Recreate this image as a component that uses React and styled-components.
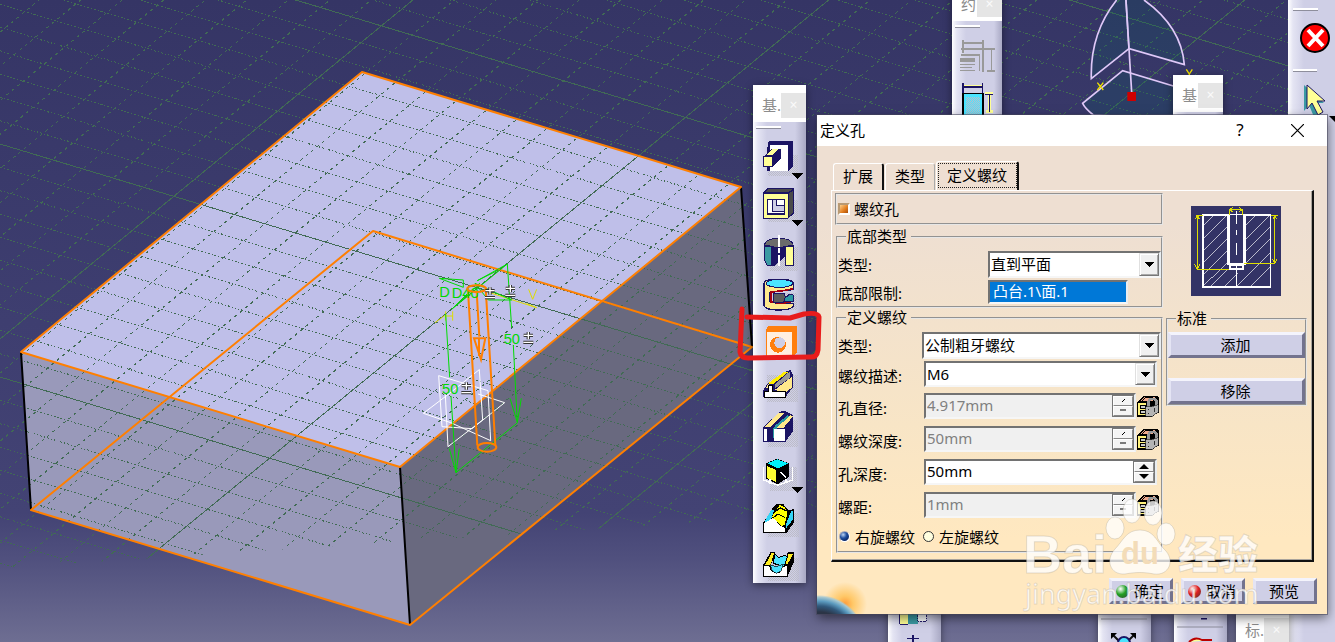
import React from "react";
import styled, { createGlobalStyle, css } from "styled-components";

const GlobalStyle = createGlobalStyle`
	* {
		box-sizing: border-box;
	}

	body {
		margin: 0;
		font-family: "Noto Sans", "Noto Sans CJK SC", sans-serif;
		font-size: 15px;
		line-height: 20px;
		color: #000;
	}

	button, input, select {
		font: inherit;
		color: inherit;
		margin: 0;
	}
`;

const Desktop = styled.main`
	position: relative;
	width: 100%;
	height: 100vh;
	overflow: hidden;
	background: linear-gradient(#353565 0, #3e3e70 50%, #434374 80%, #50507e 87%, #6e6e92 100%);
`;

const Layer = styled.svg`
	position: absolute;
	inset: 0;
	width: 100%;
	height: 100%;
	pointer-events: none;
`;

/* ---------- floating toolbars ---------- */

const Palette = styled.section`
	position: absolute;
	left: ${({ $x }) => $x}px;
	top: ${({ $y }) => $y}px;
	width: ${({ $width }) => $width || 53}px;
	background: #cfcfe6;
	box-shadow: 0 2px 8px rgba(0, 0, 0, .45);
`;

const PaletteTitle = styled.header`
	display: flex;
	align-items: center;
	justify-content: space-between;
	height: 37px;
	padding: 3px 0 0 9px;
	background: #fff;
	color: #8c8c8c;
	white-space: nowrap;
	overflow: hidden;
`;

const PaletteClose = styled.button`
	width: 25px;
	height: 25px;
	padding: 0;
	border: 0;
	flex: none;
	background: #e5e5e5;
	color: #fafafa;
	font-size: 14px;
	line-height: 24px;
`;

const PaletteBody = styled.div`
	display: flex;
	flex-direction: column;
	padding: 4px 0 0 3px;
	height: ${({ $height }) => ($height ? `${$height}px` : "auto")};
	background: linear-gradient(90deg, #fff 0, #e4e4f3 5px, #cfcfe6 14px, #cfcfe6 42px, #a9a9c4 100%);
`;

const Grip = styled.div`
	width: 25px;
	height: 3px;
	flex: none;
	margin-bottom: ${({ $after }) => $after || 0}px;
	border-top: 2px solid #fff;
	border-bottom: 1px solid #8e8e9c;
`;

const Tool = styled.button`
	display: flex;
	align-items: flex-end;
	height: ${({ $flyout }) => ($flyout ? 47 : 44)}px;
	padding: 0 0 0 7px;
	border: 0;
	background: none;
`;

const ToolIcon = styled.svg`
	width: 42px;
	height: 100%;
	display: block;
	flex: none;
`;

const NAVY = "#1b1464";

const shadowDots = (x, y, w, h) => <rect x={x} y={y} width={w} height={h} fill="url(#dots)" />;

const TOOLS = [
  {
    name: "凸台",
    flyout: true,
    top: 183,
    art: (
      <>
        {shadowDots(84, 225, 90, 62)}
        <path d="M86 184h74v76l-14 14H82v-70z" fill={NAVY} />
        <path d="M91 196h53v76H91z" fill="#fff" />
        <path d="M70 230l26-24h28v28l-26 26H70z" fill={NAVY} />
        <path d="M78 226l20-18h16l-17 18z" fill="#ffff96" />
        <path d="M72 231h23v27H72z" fill="#ffff96" />
      </>
    ),
  },
  {
    name: "凹槽",
    flyout: true,
    top: 324,
    art: (
      <>
        {shadowDots(84, 360, 90, 66)}
        <path d="M82 324h80v76l-18 16H70v-78z" fill={NAVY} />
        <path d="M85 328h72l-12 9H76zM147 341l12-10v66l-12 12z" fill="#4b4b4b" />
        <path d="M72 341h72v72H72z" fill="#ffff96" />
        <path d="M82 358h51v44H82z" fill="#fff" stroke={NAVY} strokeWidth="4" />
        <path d="M97 360h13v17h22v17H97z" fill="#cfcfe6" />
        <path d="M97 360v34h36M110 360v17h23" fill="none" stroke={NAVY} strokeWidth="3" />
      </>
    ),
  },
  {
    name: "旋转体",
    top: 465,
    art: (
      <>
        {shadowDots(90, 500, 84, 74)}
        <path d="M72 496q2-22 44-22t45 22v62h-26v-44h-4v20l-14 12-15 12H82l-10-18z" fill={NAVY} />
        <path d="M76 494q4-18 40-18t42 18l-22 4-20 5-20-5z" fill="#6b6b6b" />
        <path d="M98 500h37v30l-20 16-17 8z" fill={NAVY} />
        <path d="M76 500h18v55H83l-7-14z" fill="#3b9aa3" />
        <path d="M139 500h20v56h-20z" fill="#ffff96" />
        <path d="M117 466v92" stroke="#fff" strokeWidth="6" strokeDasharray="34 5 14 5" />
      </>
    ),
  },
  {
    name: "旋转槽",
    top: 597,
    art: (
      <>
        {shadowDots(100, 640, 72, 50)}
        <path d="M72 609q4-12 44-12t44 12v20l-22 2-32 4-16 4v26l26 6 44-1v8q-6 12-44 12t-44-12z" fill="#ffe98c" stroke={NAVY} strokeWidth="4" />
        <ellipse cx="118" cy="610" rx="40" ry="12" fill="#4ae4ff" stroke={NAVY} strokeWidth="3" />
        <path d="M160 626l-30 6-38 4v30l34 4 34-6" fill="none" stroke="#a30012" strokeWidth="5" />
        <path d="M100 640h32l6 14-6 12h-32z" fill="#5c5c5c" stroke={NAVY} strokeWidth="3" />
        <path d="M134 655l14-12 12 2v18h-28z" fill="#2b9aa3" stroke={NAVY} strokeWidth="3" />
      </>
    ),
  },
  {
    name: "孔",
    top: 69,
    art: (
      <>
        <path d="M86 78h84v80l-8 9H78V88z" fill="#ff7f0e" />
        <path d="M81 95h76v72H81z" fill="#ffefe0" />
        <circle cx="114" cy="134" r="24" fill="#ff7f0e" />
        <circle cx="119" cy="128" r="16" fill="#cfcfe6" />
      </>
    ),
  },
  {
    name: "肋",
    top: 201,
    art: (
      <>
        {shadowDots(82, 225, 92, 80)}
        <path d="M70 270l12-18 50-36 20-6 6 14v38l-22 30H70z" fill={NAVY} />
        <path d="M76 264l10-12 2 12z" fill="#ffe98c" />
        <path d="M84 250l50-35 10 2-46 36z" fill="#ffee00" />
        <path d="M104 254l46-40v20l-44 30z" fill="#989898" />
        <path d="M104 270l52-40v32l-20 16z" fill="#ffe98c" />
        <path d="M72 273h12v-18h12v18h40v18H72z" fill="#fff" stroke="#000" strokeWidth="3" />
      </>
    ),
  },
  {
    name: "开槽",
    top: 333,
    art: (
      <>
        {shadowDots(84, 360, 90, 80)}
        <path d="M70 382l48-46 14-4 28 14v46l-24 34H70z" fill={NAVY} />
        <path d="M74 382l42-42 18-2-34 34-10 10z" fill="#ffe98c" />
        <path d="M110 384l40-38 10 2-30 36z" fill="#ffe98c" />
        <path d="M98 388l8-12 36-30 6 2-36 34-4 14v18H98z" fill="#2b9aa3" />
        <path d="M72 388h10v35H72zM102 388h34v35h-34z" fill="#fff" />
        <path d="M82 386h14v30H82z" fill={NAVY} />
      </>
    ),
  },
  {
    name: "加强肋",
    flyout: true,
    top: 465,
    art: (
      <>
        {shadowDots(90, 500, 80, 74)}
        <path d="M79 490l32-14 35 14v42l-34 20-33-16z" fill="#000" />
        <path d="M82 490l30-12 32 12-30 15z" fill="#00f0f8" />
        <path d="M81 498l28 12v36l-28-12z" fill="#ffff32" />
        <path d="M70 502v38l44 16 44-16v-38M90 538v14M138 538v10M122 516l16 16" fill="none" stroke="#fff" strokeWidth="4" />
        <path d="M114 514v38" stroke="#000" strokeWidth="6" />
      </>
    ),
  },
  {
    name: "多截面实体",
    top: 606,
    art: (
      <>
        {shadowDots(84, 640, 92, 70)}
        <path d="M70 668l28-44 12-12h20l14 18 18-2v40l-22 30H70z" fill="#000" />
        <path d="M74 664l20-34h8l-8 26-14 16zM138 672l16-40h5v26l-20 26z" fill="#35d4f5" />
        <path d="M94 654l12-20 14-20 14 8 8 18-8 34-10 4-14-16z" fill="#ffff00" />
        <path d="M104 634l18-10 16 8M98 654l16-12 20 10" fill="none" stroke="#000" strokeWidth="4" />
        <path d="M72 696v-26l14-8 12-8 10 6 8 14 20 10v12z" fill="#fff" />
      </>
    ),
  },
  {
    name: "已移除的多截面实体",
    top: 738,
    art: (
      <>
        {shadowDots(84, 775, 92, 68)}
        <path d="M70 794l22-38h14v10l-14 28zM134 780l10-24h18v28l-18 43h-14z" fill="#000" />
        <path d="M76 794l18-34h8l-10 34zM136 786l10-24h13l-15 28-6 4z" fill="#ffee22" />
        <path d="M100 790l4-28 12 10 20-6 6 4-10 30z" fill="#4ae4ff" stroke="#000" strokeWidth="3" />
        <path d="M71 796h18l4 14 12 8 14-2 8-16 14-4v32H71z" fill="#fff" stroke="#000" strokeWidth="3" />
        <path d="M90 794l18 6 22-8-6 20-14 8-12-6z" fill="#4ae4ff" stroke="#000" strokeWidth="2" />
      </>
    ),
  },
];

/* ---------- dialog ---------- */

const Dialog = styled.section`
	position: absolute;
	left: 817px;
	top: 115px;
	width: 510px;
	background: linear-gradient(#eedfd2 0, #eedfd2 22%, #f8e5c6 62%, #ffe8c0 85%);
	box-shadow: 0 0 0 1px rgba(70, 70, 90, .55), 1px 4px 10px rgba(0, 0, 0, .5);
`;

const TitleBar = styled.header`
	display: flex;
	align-items: center;
	height: 31px;
	padding: 0 7px 1px 3px;
	background: #fff;
`;

const Title = styled.h1`
	flex: 1;
	margin: 0;
	font-size: 15px;
	font-weight: 400;
`;

const WindowButton = styled.button`
	display: flex;
	align-items: center;
	justify-content: center;
	width: ${({ $wide }) => ($wide ? 46 : 68)}px;
	height: 30px;
	padding: 0;
	border: 0;
	background: none;
	font-size: 17px;
`;

const DialogBody = styled.div`
	padding: 15px 13px 0 14px;
`;

const Tabs = styled.div`
	display: flex;
	align-items: flex-end;
	gap: 1px;
	padding-left: 2px;
`;

const Tab = styled.button`
	height: 27px;
	padding: 0 ${({ $active }) => ($active ? 10 : 9)}px 3px;
	background: none;
	border: 0;
	border-top: 1px solid #fff;
	border-left: 1px solid #fff;
	border-right: 1px solid #aaa;
	border-radius: 3px 3px 0 0;

	${({ $edge }) => $edge && css`
		border-right: 2px solid #111;
	`}

	${({ $active }) => $active && css`
		height: 29px;
		border-right: 2px solid #111;
		outline: 1px dotted #222;
		outline-offset: -3px;
	`}
`;

const Panel = styled.div`
	display: flex;
	gap: 2px;
	padding: 2px 5px 7px 3px;
	border: 1px solid #fff;
	border-right: 2px solid #111;
	border-bottom: 2px solid #111;
	box-shadow: inset -1px -1px 0 #a9a49c;
`;

const Main = styled.div`
	flex: 1;
	min-width: 0;
`;

const Side = styled.div`
	width: 142px;
`;

const CheckFrame = styled.label`
	display: flex;
	align-items: center;
	gap: 4px;
	height: 32px;
	padding-left: 1px;
	border: 2px groove #e6e6e6;
`;

const Check = styled.input`
	appearance: none;
	width: 12px;
	height: 12px;
	border: 2px solid;
	border-color: #b99a74 #fff #fff #b99a74;
	background: linear-gradient(135deg, #ffd08a, #e07a1c 60%, #a9500c);
`;

const Group = styled.fieldset`
	margin: ${({ $gap }) => $gap}px 0 0 1px;
	padding: 5px 0 0;
	min-width: 0;
	border: 2px groove #e6e6e6;
`;

const Legend = styled.legend`
	height: 16px;
	margin-left: 8px;
	padding: 0 4px 0 1px;
	line-height: 15px;
`;

const Row = styled.div`
	display: flex;
	align-items: center;
	height: ${({ $height }) => $height || 33}px;
	padding-right: ${({ $end }) => $end || 0}px;
`;

const Label = styled.label`
	width: ${({ $width }) => $width || 86}px;
	flex: none;
	padding-top: ${({ $width }) => ($width ? 1 : 4)}px;
	white-space: nowrap;
`;

const Sunken = styled.span`
	display: flex;
	flex: ${({ $width }) => ($width ? "none" : 1)};
	width: ${({ $width }) => ($width ? `${$width}px` : "auto")};
	min-width: 0;
	height: ${({ $height }) => $height || 26}px;
	background: ${({ $off }) => ($off ? "#f0f0f0" : "#fff")};
	color: ${({ $off }) => ($off ? "#808080" : "#000")};
	border: 2px solid;
	border-color: #727272 #e9edf0 #f6f6f6 #727272;
`;

const Select = styled.select`
	flex: 1;
	min-width: 0;
	appearance: none;
	border: 0;
	padding: 0 1px;
	background: none;
`;

const SelectArrow = styled.span`
	display: flex;
	align-items: center;
	justify-content: center;
	width: 20px;
	background: #f0f0f0;
	border: 1px solid;
	border-color: #e0e0e0 #777 #777 #e0e0e0;
	box-shadow: inset 1px 1px 0 #fff, inset -1px -1px 0 #a8a8a8;
	pointer-events: none;
`;

const Input = styled.input`
	flex: 1;
	width: 100%;
	min-width: 0;
	padding: 0 0 2px ${({ $picked }) => ($picked ? 3 : 1)}px;
	border: 0;
	background: ${({ $picked }) => ($picked ? "#0078d7" : "none")};
	color: ${({ $picked }) => ($picked ? "#fff" : "inherit")};
`;

const Spin = styled.span`
	display: flex;
	flex-direction: column;
	width: 22px;
	border: 1px solid #777;
`;

const SpinButton = styled.button`
	display: flex;
	align-items: center;
	justify-content: center;
	flex: 1;
	min-height: 0;
	padding: 0;
	background: #f4f4f4;
	border: 1px solid;
	border-color: #fff #888 #888 #fff;
`;

const LockButton = styled.button`
	width: 22px;
	height: 22px;
	margin-left: 1px;
	padding: 0;
	border: 0;
	background: none;

	svg {
		display: block;
	}
`;

const Radios = styled.div`
	display: flex;
	align-items: center;
	gap: 8px;
	height: 30px;
	padding: 1px 0 0 1px;
`;

const RadioLabel = styled.label`
	display: flex;
	align-items: center;
	gap: 5px;
`;

const Radio = styled.input`
	appearance: none;
	width: 11px;
	height: 11px;
	border: 1px solid #333;
	border-radius: 50%;
	background: #ffffe0;

	&:checked {
		border-color: #a9a9b8 #fff #fff #a9a9b8;
		background: radial-gradient(circle at 35% 30%, #bcd4f4, #1f4fa0 40%, #06205e 80%);
	}
`;

const Diagram = styled.svg`
	display: block;
	width: 90px;
	height: 90px;
	margin: 13px auto 0 26px;
`;

const SideButtons = styled.div`
	display: flex;
	flex-direction: column;
	gap: 20px;
`;

const PushButton = styled.button`
	display: flex;
	align-items: center;
	justify-content: center;
	gap: 5px;
	height: 26px;
	width: ${({ $width }) => ($width ? `${$width}px` : "100%")};
	padding: 0 2px 0 0;
	white-space: nowrap;
	background: #cfcfe6;
	border: 3px solid;
	border-color: #f4f4fc #73738e #73738e #e4e4f4;
`;

const Dot = styled.span`
	width: 13px;
	height: 13px;
	border-radius: 50%;
	background: radial-gradient(circle at 35% 30%, #fff, ${({ $color }) => $color} 45%, #333 110%);
`;

const Footer = styled.footer`
	display: flex;
	justify-content: flex-end;
	gap: 8px;
	padding: 16px 10px 10px 0;
	background:
		radial-gradient(circle at 2px 80px, #2b3446 30px, #31597c 36px, #5d9cc0 41px, #a8c8d0 45px, transparent 47px),
		radial-gradient(circle at 28px 42px, #ff9c38 0, #ffc868 8px, transparent 22px);
`;

const Down = () => (
  <svg width="10" height="5" viewBox="0 0 10 5" shapeRendering="crispEdges"><path d="M0 0h10L5 5z" /></svg>
);

const Lock = () => (
  <svg width="22" height="22" viewBox="198 274 66 66" shapeRendering="crispEdges">
    <path d="M199 296l20-20h41l4 8v42l-22 13h-43z" fill="#000" />
    <path d="M208 293l14-14h31l-8 14z" fill="#efaa8c" />
    <path d="M214 290l10-8h22" stroke="#000" strokeWidth="3" fill="none" />
    <path d="M202 298h22v36h-22z" fill="#fff27a" />
    <path d="M208 304h14v10h-14zM208 319h14v9h-14z" fill="#ccc" stroke="#000" strokeWidth="3" />
    <path d="M232 310v-16l7-8h11l7 7v15" fill="none" stroke="#999" strokeWidth="8" />
    <path d="M224 309h17l21-6v22l-17 12h-21z" fill="#b4b4b4" stroke="#333" strokeWidth="2" />
    <path d="M230 318h5M230 329h5M250 312v14" stroke="#333" strokeWidth="4" />
  </svg>
);

const Field = ({ id, label, value, locked }) => (
  <Row $end={locked ? 2 : 4}>
    <Label htmlFor={id}>{label}</Label>
    <Sunken $off={locked}>
      <Input id={id} defaultValue={value} disabled={locked} />
      <Spin>
        <SpinButton type="button" aria-label="增加" disabled={locked}>
          <svg width="10" height="5" viewBox="0 0 10 5"><path d={locked ? "M4 4l3-3" : "M0 5h10L5 0z"} stroke={locked ? "#000" : "none"} /></svg>
        </SpinButton>
        <SpinButton type="button" aria-label="减少" disabled={locked}>
          <svg width="10" height="5" viewBox="0 0 10 5"><path d={locked ? "M2 2h6" : "M0 0h10L5 5z"} stroke={locked ? "#000" : "none"} /></svg>
        </SpinButton>
      </Spin>
    </Sunken>
    {locked && <LockButton type="button" aria-label="公式"><Lock /></LockButton>}
  </Row>
);

const HoleDiagram = () => (
  <Diagram viewBox="363 273 270 270" shapeRendering="crispEdges">
    <path d="M363 273h270v270H363z" fill="#333366" />
    <g stroke="#fff" strokeWidth="3" fill="none">
      <path d="M398 334l34-34M398 374l74-74M398 410l74-74M398 446l74-74M398 482l74-74M398 514l74-70M421 515l52-52M462 515l42-42M525 334l34-34M525 374l74-74M525 410l75-75M525 446l75-75M500 515l100-100M540 515l60-60" strokeWidth="2" />
      <path d="M398 299h203v217H398z" strokeWidth="5" />
      <path d="M475 299v148h48V299" fill="#333366" strokeWidth="7" />
      <path d="M479 449h40v13h-40z" fill="#333366" strokeWidth="5" />
      <path d="M499 288v40M499 346v14M499 384v36M499 450v8M499 466v48" />
    </g>
    <path d="M398 301h-20M382 301v162h94M376 312l6-11 6 11M374 447l8 16 8-16M602 301h21M614 301v144h-92M608 313l6-11 6 11M608 433l6 12 6-12M478 299v-15h40v15M488 278l-9 6 9 6M508 278l9 6-9 6" fill="none" stroke="#dede00" strokeWidth="3" />
  </Diagram>
);

const HoleDialog = () => (
  <Dialog role="dialog" aria-labelledby="dialog-title">
    <TitleBar>
      <Title id="dialog-title">定义孔</Title>
      <WindowButton type="button" aria-label="帮助">?</WindowButton>
      <WindowButton type="button" aria-label="关闭" $wide>
        <svg width="13" height="13" viewBox="0 0 13 13"><path d="M0 0l13 13M13 0L0 13" stroke="#000" strokeWidth="1.2" /></svg>
      </WindowButton>
    </TitleBar>
    <DialogBody>
      <Tabs role="tablist">
        <Tab type="button" role="tab" $edge>扩展</Tab>
        <Tab type="button" role="tab">类型</Tab>
        <Tab type="button" role="tab" aria-selected="true" $active>定义螺纹</Tab>
      </Tabs>
      <Panel role="tabpanel">
        <Main>
          <CheckFrame>
            <Check type="checkbox" defaultChecked />
            螺纹孔
          </CheckFrame>
          <Group $gap={4}>
            <Legend>底部类型</Legend>
            <Row $height={28}>
              <Label htmlFor="bottom-type" $width={150}>类型:</Label>
              <Sunken $height={27}>
                <Select id="bottom-type"><option>直到平面</option></Select>
                <SelectArrow><Down /></SelectArrow>
              </Sunken>
            </Row>
            <Row $height={28}>
              <Label htmlFor="bottom-limit" $width={150}>底部限制:</Label>
              <Sunken $height={24} $width={140}>
                <Input id="bottom-limit" defaultValue="凸台.1\面.1" $picked />
              </Sunken>
            </Row>
          </Group>
          <Group $gap={2}>
            <Legend>定义螺纹</Legend>
            <Row $height={28}>
              <Label htmlFor="thread-type" $width={84}>类型:</Label>
              <Sunken $height={27}>
                <Select id="thread-type"><option>公制粗牙螺纹</option></Select>
                <SelectArrow><Down /></SelectArrow>
              </Sunken>
            </Row>
            <Row $height={30} $end={4}>
              <Label htmlFor="thread-size">螺纹描述:</Label>
              <Sunken>
                <Select id="thread-size"><option>M6</option></Select>
                <SelectArrow><Down /></SelectArrow>
              </Sunken>
            </Row>
            <Field id="hole-diameter" label="孔直径:" value="4.917mm" locked />
            <Field id="thread-depth" label="螺纹深度:" value="50mm" locked />
            <Field id="hole-depth" label="孔深度:" value="50mm" />
            <Field id="pitch" label="螺距:" value="1mm" locked />
            <Radios>
              <RadioLabel><Radio type="radio" name="hand" defaultChecked />右旋螺纹</RadioLabel>
              <RadioLabel><Radio type="radio" name="hand" />左旋螺纹</RadioLabel>
            </Radios>
          </Group>
        </Main>
        <Side>
          <HoleDiagram />
          <Group $gap={15}>
            <Legend>标准</Legend>
            <SideButtons>
              <PushButton type="button">添加</PushButton>
              <PushButton type="button">移除</PushButton>
            </SideButtons>
          </Group>
        </Side>
      </Panel>
    </DialogBody>
    <Footer>
      <PushButton type="button" $width={64}><Dot $color="#22a022" />确定</PushButton>
      <PushButton type="button" $width={64}><Dot $color="#e02020" />取消</PushButton>
      <PushButton type="button" $width={64}>预览</PushButton>
    </Footer>
  </Dialog>
);

/* ---------- 3D view ---------- */

const range = (from, to) => Array.from({ length: to - from + 1 }, (_, i) => from + i);

const Grid = () => (
  <g stroke="#416b54" fill="none" clipPath="url(#ground)" shapeRendering="crispEdges">
    {range(-18, 29).map((j) => (
      <line
        key={`a${j}`}
        x1="0"
        y1={-89 + j * 23.3}
        x2="1335"
        y2={-89 + j * 23.3 + 402}
        strokeDasharray={j % 10 === 0 ? "none" : "2 2 1 2"}
      />
    ))}
    {range(-16, 38).map((k) => (
      <line
        key={`b${k}`}
        x1={794 + k * 30.3}
        y1={-313 + k * 9.3}
        x2={-448 + k * 30.3}
        y2={707 + k * 9.1}
        strokeDasharray={k % 10 === 0 ? "none" : "3 4"}
      />
    ))}
  </g>
);

const PlusMinus = ({ x, y }) => (
  <g transform={`translate(${x} ${y})`} fill="none">
    <path d="M0 -16v22M-14 -6h28M-15 15h30" stroke="#333" strokeWidth="10" />
    <path d="M0 -16v22M-14 -6h28M-15 15h30" stroke="#fff" strokeWidth="4" />
  </g>
);

const Scene = () => (
  <Layer viewBox="0 0 1335 642" preserveAspectRatio="xMinYMin slice">
    <defs>
      <clipPath id="ground"><path d="M0 0h1335v480L0 568z" /></clipPath>
      <pattern id="dots" width="6" height="6" patternUnits="userSpaceOnUse">
        <path d="M0 0h3v3H0zM3 3h3v3H3z" fill="#bcbcc8" />
      </pattern>
    </defs>
    <path d="M362 72l379 115-341 280L21 352z" fill="#bfbfe9" />
    <path d="M21 352l379 115 10 158L31 510z" fill="#9999ba" />
    <path d="M741 187l11 160-342 278-10-158z" fill="#69697f" />
    <Grid />
    <path d="M21 352l10 158M400 467l10 158M741 187l11 160" stroke="#000" strokeWidth="2" />
    <path d="M362 72l379 115-341 280L21 352zM31 510l379 115 342-278-379-116z" fill="none" stroke="#ff7f00" strokeWidth="2" strokeLinejoin="round" />

    <g transform="translate(400 220) scale(.3333)" fill="none" strokeWidth="3">
      <path d="M239 448l-90 72-79 60 82 28 120 54-8-150-148-45 10 153 90 6 98-78-80-26M136 525l8 155 104-80-10-150" stroke="#fff" />
      <path d="M105 308l30-22M260 215l150 48-30-12M386 208l12 30 12-30M137 302v-28M158 302v-28M137 288h21" stroke="#dddd00" />
      <path d="M322 132l13 190M340 375l12 232-22-72M352 607l12-72M137 282l12 190M153 528l15 230-20-72M168 758l10-72M168 758l185-150M118 175l72 5v22zM155 268l167-136-90 50 60-30M155 268l50-50M225 190l110 50h-70zM180 245l60-56" stroke="#00dd00" />
      <path d="M204 212l28 465M257 205l29 470M230 215l8 135" stroke="#ff7f00" strokeWidth="6" />
      <path d="M222 355h34l-13 64zM237 358v50" stroke="#ff7f00" strokeWidth="6" />
      <ellipse cx="261" cy="682" rx="28" ry="13" stroke="#ff7f00" strokeWidth="6" />
      <g fill="#00d800" fontFamily="Liberation Sans" fontSize="44">
        <text x="118" y="230">D</text>
        <text x="155" y="234">D40</text>
        <text x="311" y="372">50</text>
        <text x="126" y="522">50</text>
      </g>
      <ellipse cx="230" cy="206" rx="28" ry="10" stroke="#ff7f00" strokeWidth="6" />
      <PlusMinus x={270} y={218} />
      <PlusMinus x={331} y={211} />
      <PlusMinus x={385} y={352} />
      <PlusMinus x={199} y={503} />
    </g>

    <g transform="translate(940 0) scale(.3333)" stroke="#dfc8f8" strokeWidth="5" fill="none">
      <path d="M530 0Q450 100 454 236L567 146 558 0z" fill="rgba(0, 90, 90, .2)" stroke="none" />
      <path d="M530 0Q450 100 454 236L567 146 558 0" />
      <path d="M612 0Q724 80 733 194L567 146 558 0z" fill="rgba(0, 90, 90, .2)" stroke="none" />
      <path d="M612 0Q724 80 733 194L567 146 558 0" />
      <path d="M460 345q-25-20-32-35L548 212l152 46 60 20v80z" fill="rgba(0, 90, 90, .2)" />
      <path d="M567 146l8 130" />
      <path d="M562 276h26v27h-26z" fill="#d00000" stroke="none" />
      <path d="M472 248l18 22M490 248l-18 22M739 208l9 14 9-14M748 222v10" stroke="#f0e000" strokeWidth="4" />
    </g>
  </Layer>
);

const ConstraintBar = () => (
  <Palette $x={952} $y={-16} $width={50}>
    <PaletteTitle>约<PaletteClose aria-label="关闭">×</PaletteClose></PaletteTitle>
    <PaletteBody $height={120}>
      <Grip />
      <svg width="40" height="100" viewBox="45 87 120 300" shapeRendering="crispEdges">
        <path d="M69 122v40M128 122v96M69 132h60M62 150h102M154 150v66M140 216h24M62 168h56v48" fill="none" stroke="#999" strokeWidth="5" />
        <path d="M60 176h44v12H60zM60 194h44v3H60zM60 203h36v3H60zM60 212h44v3H60z" fill="#999" />
        <path d="M69 262h60M134 284h24M148 288v50M138 338h20" stroke="#ffff96" strokeWidth="10" />
        <path d="M69 252v30M128 252v30M69 264h60M134 286h24M148 288v50" stroke={NAVY} strokeWidth="4" />
        <path d="M69 283h60v80H69z" fill="#4ae4ff" stroke="#000" strokeWidth="5" />
        <path d="M78 294h42v60H78z" fill="url(#dots)" />
      </svg>
    </PaletteBody>
  </Palette>
);

const FeatureBar = () => (
  <Palette $x={753} $y={85} as="nav">
    <PaletteTitle>基.<PaletteClose aria-label="关闭">×</PaletteClose></PaletteTitle>
    <PaletteBody $height={461}>
      <Grip $after={12} />
      {TOOLS.map(({ name, top, art, flyout }) => (
        <Tool key={name} type="button" title={name} $flyout={flyout}>
          <ToolIcon viewBox={`69 ${top} 126 ${flyout ? 141 : 132}`} shapeRendering="crispEdges">
            {art}
            {flyout && <path d={`M155 ${top + 96}h36l-18 18z`} />}
          </ToolIcon>
        </Tool>
      ))}
    </PaletteBody>
  </Palette>
);

const RightDock = styled.aside`
	position: absolute;
	top: 0;
	bottom: 0;
	right: 0;
	width: 47px;
	padding: 8px 0 0 5px;
	background: linear-gradient(90deg, #fff 0, #e4e4f3 5px, #cfcfe6 16px);
`;

const SmallBars = () => (
  <>
    <Palette $x={888} $y={560}>
      <PaletteBody $height={90}>
        <svg width="46" height="90" viewBox="0 0 46 90" shapeRendering="crispEdges">
          <path d="M8 46h9v17H8zM10 46h20v6H10z" fill="#ffff96" stroke={NAVY} />
          <path d="M17 52h10v11H17z" fill="#3b9aa3" />
          <path d="M27 50h9v10h-9z" fill="#fff" stroke={NAVY} strokeDasharray="2 1" />
          <path d="M16 78h12M22 74v8" stroke={NAVY} strokeWidth="2" />
        </svg>
      </PaletteBody>
    </Palette>
    <Palette $x={1098} $y={614}>
      <PaletteBody $height={60}>
        <svg width="48" height="30" viewBox="0 0 48 30">
          <path d="M0 1h46" stroke="#8e8e9c" />
          <path d="M12 17l7 7M33 17l-7 7" stroke="#111" strokeWidth="2" />
          <path d="M10 15h6l-6 6zM35 15h-6l6 6z" />
          <circle cx="23" cy="25" r="6" fill="#4ae4ff" stroke={NAVY} strokeWidth="2" />
        </svg>
      </PaletteBody>
    </Palette>
    <Palette $x={1174} $y={614}>
      <PaletteBody $height={60}>
        <svg width="48" height="30" viewBox="0 0 48 30">
          <path d="M0 9h46" stroke="#8e8e9c" />
          <path d="M12 24q6-6 13-2h10" stroke="#b00" strokeWidth="2" fill="#ffff96" />
          <path d="M18 0v-2M24 0h6" stroke={NAVY} strokeWidth="3" />
        </svg>
      </PaletteBody>
    </Palette>
    <Palette $x={1236} $y={610}>
      <PaletteTitle>标.<PaletteClose aria-label="关闭">×</PaletteClose></PaletteTitle>
    </Palette>
    <Palette $x={1173} $y={75} $width={50}>
      <PaletteTitle>基<PaletteClose aria-label="关闭">×</PaletteClose></PaletteTitle>
      <PaletteBody $height={20} />
    </Palette>
  </>
);

const Dock = () => (
  <RightDock>
    <Grip />
    <svg width="42" height="112" viewBox="1293 11 42 112">
      <circle cx="1315" cy="38" r="14" fill="#ff0000" stroke="#000" strokeWidth="2" />
      <path d="M1308 30l15 16M1323 30l-15 16" stroke="#fff" strokeWidth="4" />
      <path d="M1293 70h24" stroke="#fff" strokeWidth="2" />
      <path d="M1293 71.500h24" stroke="#8e8e9c" />
      <path d="M1304 85v26l5-6 5 12 7-3-5-11h8z" fill="#3b9aa3" />
      <path d="M1307 85v24l5-6 6 12 5-3-6-11h8z" fill="#ffff96" stroke={NAVY} />
      <path d="M1329 116h12l-6 6z" />
    </svg>
  </RightDock>
);

const Overlay = () => (
  <Layer viewBox="0 0 1335 642" preserveAspectRatio="xMinYMin slice">
    <path d="M747 317l43 1 14-4q14-2 15 3l-1 33q-1 8-8 7l-62 1q-7 0-8-6l2-43" fill="none" stroke="#e81c1c" strokeWidth="5" strokeLinecap="round" strokeLinejoin="round" />
    <g fill="#fff" fillOpacity=".78" stroke="#a39a8a" strokeOpacity=".3">
      <text x="1023" y="573" fontFamily="Liberation Sans" fontWeight="700" fontSize="54" strokeWidth="1">Bai</text>
      <ellipse cx="1115" cy="528" rx="9" ry="11" />
      <ellipse cx="1132" cy="511" rx="9" ry="12" />
      <ellipse cx="1153" cy="513" rx="9" ry="12" />
      <ellipse cx="1166" cy="534" rx="9" ry="11" />
      <path d="M1140 530c14 0 17 12 24 19 12 11 5 27-10 25-10-2-18-2-29 0-15 1-20-14-10-25 8-8 11-19 25-19z" />
      <text x="1178" y="569" fontFamily="Noto Sans CJK SC" fontWeight="900" fontSize="40">经验</text>
      <text x="1025" y="604" fontFamily="Noto Sans" fontSize="27">jingyan.baidu.com</text>
    </g>
    <text x="1121" y="564" fontFamily="Liberation Sans" fontWeight="700" fontSize="31" fill="#f3dcb8">du</text>
  </Layer>
);

const App = () => (
  <>
    <GlobalStyle />
    <Desktop>
      <Scene />
      <Dock />
      <ConstraintBar />
      <SmallBars />
      <FeatureBar />
      <HoleDialog />
      <Overlay />
    </Desktop>
  </>
);

export default App;
